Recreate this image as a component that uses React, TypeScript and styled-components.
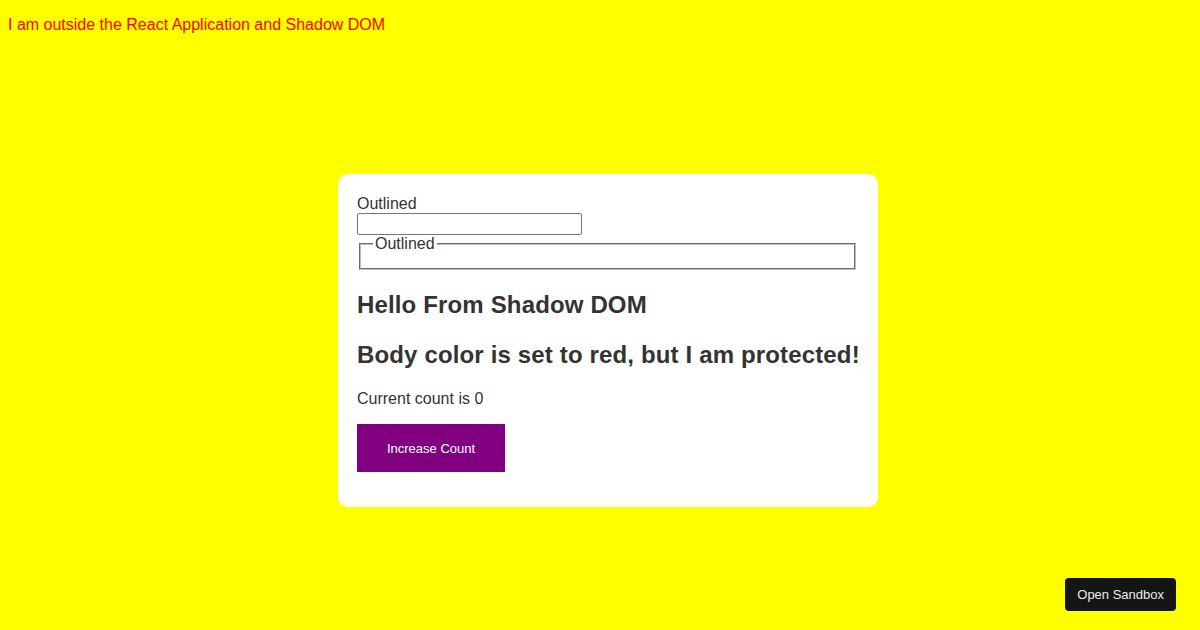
import styled, { createGlobalStyle } from 'styled-components';
import { useState } from 'react';

const GlobalStyle = createGlobalStyle`
  html, body {
    background-color: #ffff00;
  }

  body {
    margin: 0;
    padding: 8px;
    font-family: "Liberation Sans", Arial, sans-serif;
    color: #ff0000;
  }
`;

const Outside = styled.p`
  margin: 8px 0 16px;
  font-size: 16px;
`;

const Stage = styled.div`
  display: flex;
  justify-content: center;
  padding: 124px 0 0 16px;
`;

const Card = styled.div`
  width: 540px;
  box-sizing: border-box;
  padding: 21px 20px 20px 19px;
  background-color: #ffffff;
  border-radius: 10px;
  color: #333333;
  font-size: 16px;

  h2 {
    font-size: 24px;
    line-height: 30px;
    letter-spacing: 0.15px;
    white-space: nowrap;
    margin: 20px 0;
  }

  p {
    margin: 16px 0;
  }
`;

const Label = styled.label`
  display: block;
`;

const TextInput = styled.input`
  display: block;
  width: 225px;
  height: 22px;
  box-sizing: border-box;
  border: 1px solid #767676;
  border-radius: 2px;
  font-family: inherit;
`;

const Fieldset = styled.fieldset`
  margin: 0 2px;
  padding: 5px 12px 10px;
  border: 2px groove #c0c0c0;

  legend {
    padding: 0 2px;
    color: #333333;
  }
`;

const CountButton = styled.button`
  width: 148px;
  height: 48px;
  margin-bottom: 15px;
  border: none;
  background-color: #800080;
  color: #ffffff;
  font-family: inherit;
  font-size: 13px;
  cursor: pointer;
`;

const SandboxButton = styled.button`
  position: fixed;
  right: 24px;
  bottom: 19px;
  height: 33px;
  padding: 0 12px;
  border: none;
  border-radius: 4px;
  background-color: #151515;
  color: #ececec;
  font-family: "Liberation Sans", Arial, sans-serif;
  font-size: 13px;
`;

export default function App() {
  const [count, setCount] = useState(0);

  return (
    <>
      <GlobalStyle />
      <Outside>I am outside the React Application and Shadow DOM</Outside>
      <Stage>
        <Card>
          <Label htmlFor='outlined'>Outlined</Label>
          <TextInput id='outlined' type='text' />
          <Fieldset>
            <legend>Outlined</legend>
          </Fieldset>
          <h2>Hello From Shadow DOM</h2>
          <h2>Body color is set to red, but I am protected!</h2>
          <p>Current count is {count}</p>
          <CountButton onClick={() => setCount(count + 1)}>Increase Count</CountButton>
        </Card>
      </Stage>
      <SandboxButton>Open Sandbox</SandboxButton>
    </>
  );
}
